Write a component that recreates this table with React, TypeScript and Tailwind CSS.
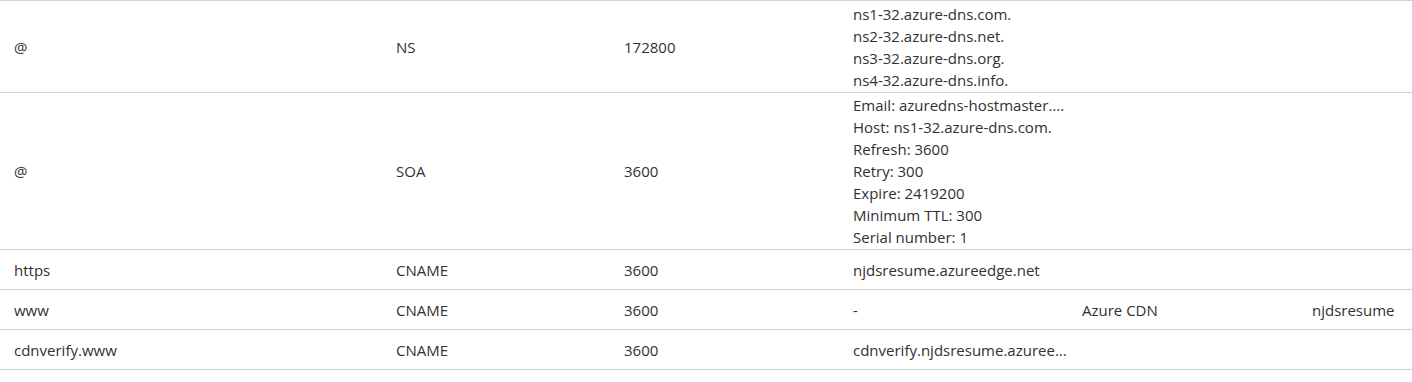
const records = [
  {
    name: '@',
    type: 'NS',
    ttl: '172800',
    value: ['ns1-32.azure-dns.com.', 'ns2-32.azure-dns.net.', 'ns3-32.azure-dns.org.', 'ns4-32.azure-dns.info.'],
  },
  {
    name: '@',
    type: 'SOA',
    ttl: '3600',
    value: [
      'Email: azuredns-hostmaster....',
      'Host: ns1-32.azure-dns.com.',
      'Refresh: 3600',
      'Retry: 300',
      'Expire: 2419200',
      'Minimum TTL: 300',
      'Serial number: 1',
    ],
  },
  { name: 'https', type: 'CNAME', ttl: '3600', value: ['njdsresume.azureedge.net'] },
  { name: 'www', type: 'CNAME', ttl: '3600', value: ['-'], alias: 'Azure CDN', target: 'njdsresume' },
  { name: 'cdnverify.www', type: 'CNAME', ttl: '3600', value: ['cdnverify.njdsresume.azuree...'] },
];

export default function App() {
  return (
    <div
      className="w-[1412px] h-[382px] bg-white text-[#323130] text-[15px] leading-[22px]"
      style={{ fontFamily: '"Segoe UI", "Open Sans", sans-serif' }}
    >
      <div className="border-t border-[#d2d2d2]">
        {records.map((r, i) => (
          <div
            key={i}
            className={
              'grid grid-cols-[382px_228px_229px_229px_230px_1fr] items-center pl-[14px] pb-px min-h-[40px] border-b border-[#d2d2d2] ' +
              (i === 0 ? 'pt-[2px]' : 'pt-px')
            }
          >
            <div>{r.name}</div>
            <div>{r.type}</div>
            <div>{r.ttl}</div>
            <div className="flex flex-col">
              {r.value.map((v) => (
                <span key={v}>{v}</span>
              ))}
            </div>
            <div>{r.alias}</div>
            <div>{r.target}</div>
          </div>
        ))}
      </div>
    </div>
  );
}
